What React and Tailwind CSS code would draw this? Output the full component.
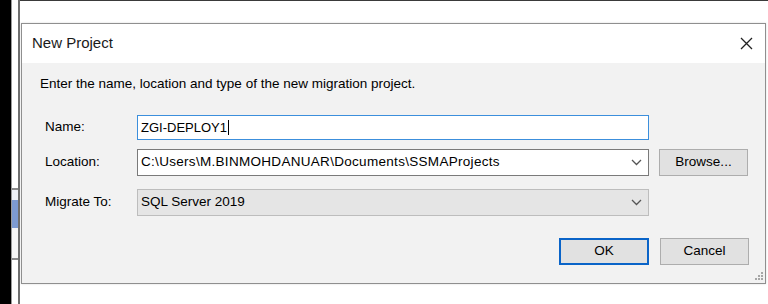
import React from "react";

function Chevron() {
  return (
    <svg width="11" height="7" viewBox="0 0 11 7" className="shrink-0">
      <polyline points="1,1 5.5,5.5 10,1" fill="none" stroke="#555" strokeWidth="1.3" />
    </svg>
  );
}

function Grip() {
  const dots = [
    [6, 0],
    [3, 3],
    [6, 3],
    [0, 6],
    [3, 6],
    [6, 6],
  ];
  return (
    <svg width="8" height="8" viewBox="0 0 8 8">
      {dots.map(([x, y]) => (
        <rect key={`${x}-${y}`} x={x} y={y} width="2" height="2" fill="#a6a6a6" />
      ))}
    </svg>
  );
}

export default function App() {
  return (
    <div
      className="w-[768px] h-[304px] bg-white flex overflow-hidden text-[13.5px] text-black"
      style={{ fontFamily: '"Liberation Sans", Arial, sans-serif' }}
    >
      {/* strip of the window behind, on the left */}
      <div className="w-[11px] h-full bg-black shrink-0" />
      <div className="w-[9px] h-full shrink-0 bg-white border-l border-[#9a9a9a] border-r-2 border-r-[#6f6f6f] flex flex-col">
        <div className="h-[188px]" />
        <div className="h-[2px] bg-[#8a8a8a]" />
        <div className="h-[10px] bg-[#eef1f6]" />
        <div className="h-[28px] bg-[#7d9bd2]" />
        <div className="h-[30px] bg-[#f6f6f6]" />
        <div className="h-[2px] bg-[#8a8a8a]" />
      </div>

      {/* main area */}
      <div className="flex-1 flex flex-col border-t border-[#3a3a3a]">
        <div className="h-[22px]" />
        <div className="ml-[1px] w-[745px] h-[261px] border border-[#8f8f8f] flex flex-col shadow-[0_0_2px_rgba(0,0,0,0.15)]">
          {/* title bar */}
          <div className="h-[39px] bg-white flex items-center justify-between pl-[10px] pr-[12px] shrink-0">
            <span className="text-[15px] text-[#1a1a1a]">New Project</span>
            <svg width="13" height="13" viewBox="0 0 13 13">
              <path d="M1 1 L12 12 M12 1 L1 12" stroke="#222" strokeWidth="1.3" fill="none" />
            </svg>
          </div>

          {/* body */}
          <div className="flex-1 bg-[#f2f2f2] relative flex flex-col">
            <div className="pl-[18px] pt-[13px] leading-[16px]">
              Enter the name, location and type of the new migration project.
            </div>

            <div className="flex flex-col pl-[23px] pt-[23px]">
              <div className="flex items-center h-[25px]">
                <span className="w-[92px]">Name:</span>
                <div className="w-[512px] h-[25px] bg-white border border-[#3c8fdc] flex items-center pl-[3px] text-[13px]">
                  <span>ZGI-DEPLOY1</span>
                  <span className="w-px h-[15px] bg-black ml-px" />
                </div>
              </div>

              <div className="flex items-center h-[27px] mt-[9px]">
                <span className="w-[92px]">Location:</span>
                <div className="w-[512px] h-[27px] bg-white border border-[#7a7a7a] flex items-center justify-between pl-[3px] pr-[6px]">
                  <span className="tracking-[0.3px]">C:\Users\M.BINMOHDANUAR\Documents\SSMAProjects</span>
                  <Chevron />
                </div>
                <button className="ml-[10px] w-[89px] h-[27px] bg-[#e1e1e1] border border-[#adadad] flex items-center justify-center">
                  Browse...
                </button>
              </div>

              <div className="flex items-center h-[27px] mt-[13px]">
                <span className="w-[92px]">Migrate To:</span>
                <div className="w-[512px] h-[27px] bg-[#e5e5e5] border border-[#bdbdbd] flex items-center justify-between pl-[3px] pr-[6px]">
                  <span>SQL Server 2019</span>
                  <Chevron />
                </div>
              </div>
            </div>

            <div className="flex justify-end gap-[11px] pr-[16px] mt-[22px]">
              <button className="w-[90px] h-[27px] bg-[#e1e1e1] border-2 border-[#0a64c8] flex items-center justify-center">
                OK
              </button>
              <button className="w-[89px] h-[27px] bg-[#e1e1e1] border border-[#adadad] flex items-center justify-center">
                Cancel
              </button>
            </div>

            <div className="absolute right-[2px] bottom-[3px]">
              <Grip />
            </div>
          </div>
        </div>
      </div>
    </div>
  );
}
